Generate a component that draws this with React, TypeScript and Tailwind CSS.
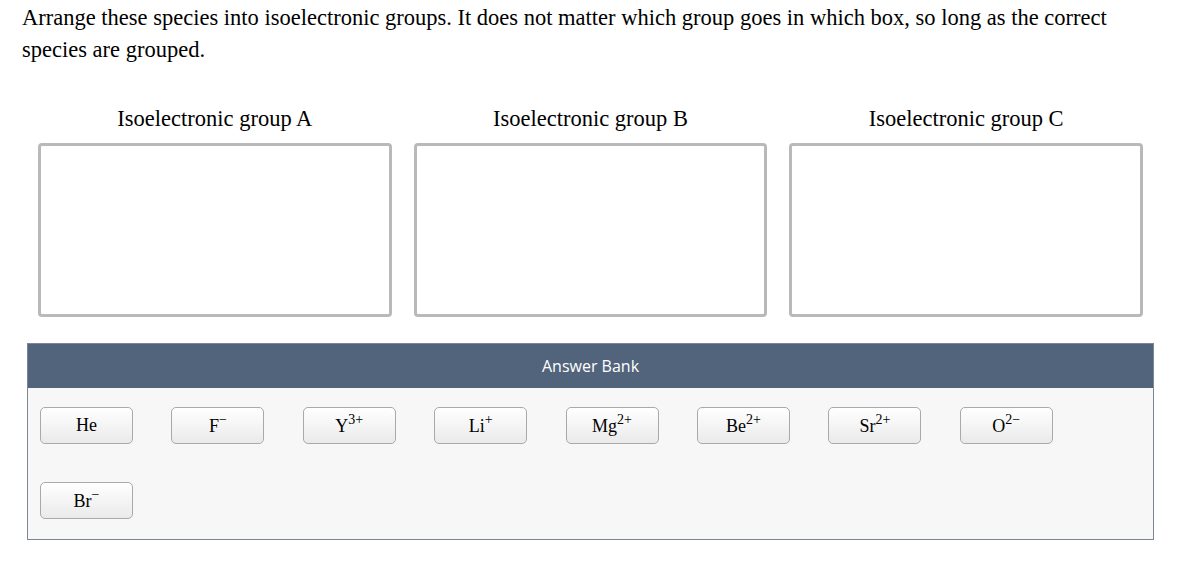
import React from "react";

interface Species {
  symbol: string;
  charge?: string;
}

const groups = ["A", "B", "C"];

const species: Species[] = [
  { symbol: "He" },
  { symbol: "F", charge: "\u2212" },
  { symbol: "Y", charge: "3+" },
  { symbol: "Li", charge: "+" },
  { symbol: "Mg", charge: "2+" },
  { symbol: "Be", charge: "2+" },
  { symbol: "Sr", charge: "2+" },
  { symbol: "O", charge: "2\u2212" },
  { symbol: "Br", charge: "\u2212" },
];

const serif = { fontFamily: '"Liberation Serif", "Times New Roman", serif' };

const Tile: React.FC<{ item: Species }> = ({ item }) => (
  <button
    className="w-[93px] h-[37px] rounded-[5px] border border-[#a9a9a9] bg-gradient-to-b from-white to-[#eaeaea] text-[18px] text-black flex items-center justify-center pb-[2px]"
    style={serif}
  >
    <span className="leading-none">
      {item.symbol}
      {item.charge && (
        <sup className="text-[14px] relative -top-[1px] align-super leading-none">
          {item.charge}
        </sup>
      )}
    </span>
  </button>
);

const App: React.FC = () => {
  return (
    <div className="w-[1184px] h-[575px] bg-white text-black" style={serif}>
      <p className="pl-[22px] pt-[2px] w-[1130px] text-[22.5px] leading-[32px]">
        Arrange these species into isoelectronic groups. It does not matter
        which group goes in which box, so long as the correct species are
        grouped.
      </p>

      <div className="ml-[38px] mt-[40px] w-[1105px] grid grid-cols-3 gap-x-[22px]">
        {groups.map((g) => (
          <div key={g} className="flex flex-col items-center">
            <div className="text-[22.5px] leading-[26px]">
              Isoelectronic group {g}
            </div>
            <div className="mt-[11px] w-full h-[174px] rounded-[4px] border-[3px] border-[#b9b9b9] bg-white" />
          </div>
        ))}
      </div>

      <div className="ml-[27px] mt-[26px] w-[1127px] h-[197px] border border-[#7d8794] bg-[#f7f7f7]">
        <div
          className="h-[44px] bg-[#52647b] text-white text-[16px] flex items-center justify-center"
          style={{ fontFamily: '"Open Sans", "Noto Sans", sans-serif' }}
        >
          Answer Bank
        </div>
        <div className="pl-[12px] pt-[19px] flex flex-wrap gap-x-[38.4px] gap-y-[38px]">
          {species.map((s) => (
            <Tile key={s.symbol} item={s} />
          ))}
        </div>
      </div>
    </div>
  );
};

export default App;
